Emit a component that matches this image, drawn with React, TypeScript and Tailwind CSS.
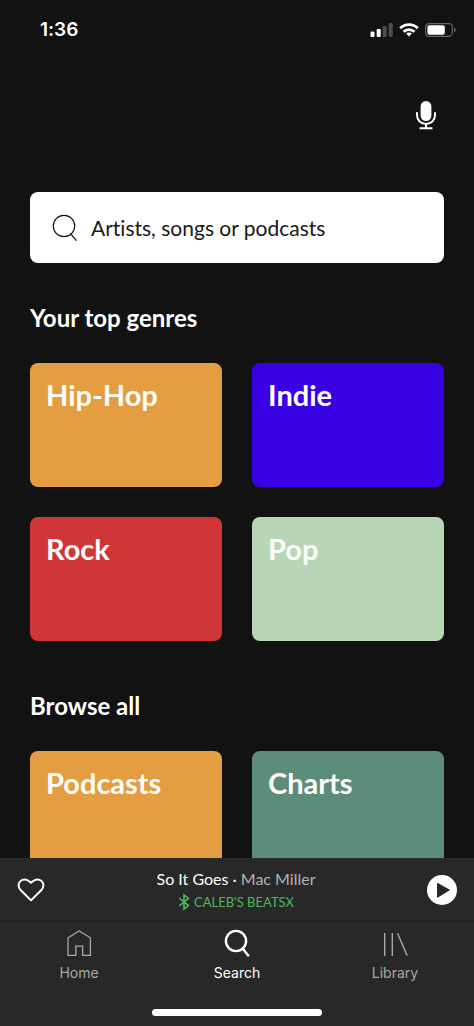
import { useState } from "react";

const topGenres = [
  { name: "Hip-Hop", color: "bg-[#e49d40]" },
  { name: "Indie", color: "bg-[#3a00e4]" },
  { name: "Rock", color: "bg-[#d03638]" },
  { name: "Pop", color: "bg-[#b8d5b5]" },
];

const browseAll = [
  { name: "Podcasts", color: "bg-[#e49d40]" },
  { name: "Charts", color: "bg-[#5c8d7b]" },
];

const StatusBar = () => {
  return (
    <div className="flex h-[59px] shrink-0 items-center justify-between pl-10 pr-[18px]">
      <span className="font-['Inter',sans-serif] text-[19px] font-semibold leading-6">
        1:36
      </span>
      <div className="flex items-center gap-[6px]">
        <svg width="23" height="14" viewBox="0 0 23 14" fill="white">
          <rect x="0.5" y="8.5" width="4" height="5.5" rx="1.2" />
          <rect x="6.7" y="6" width="4" height="8" rx="1.2" />
          <rect x="12.7" y="3" width="4" height="11" rx="1.2" opacity="0.25" />
          <rect x="18.7" y="0" width="4" height="14" rx="1.2" opacity="0.25" />
        </svg>
        <svg
          width="20"
          height="14"
          viewBox="0 0 20 14"
          fill="none"
          stroke="white"
          strokeWidth="2.8"
        >
          <path d="M1.2 5.2C6.2 0.3 13.8 0.3 18.8 5.2" />
          <path d="M4.5 8.8C7.6 5.9 12.4 5.9 15.5 8.8" />
          <path
            d="M10 9.4C8.8 9.4 7.9 9.8 7.1 10.5L10 13.6L12.9 10.5C12.1 9.8 11.2 9.4 10 9.4Z"
            fill="white"
            stroke="none"
          />
        </svg>
        <svg width="31" height="14" viewBox="0 0 31 14" fill="none">
          <rect
            x="0.6"
            y="0.6"
            width="26.8"
            height="12.8"
            rx="3.6"
            stroke="#666666"
            strokeWidth="1.2"
          />
          <rect x="2.4" y="2.2" width="17.4" height="9.6" rx="2" fill="white" />
          <path
            d="M29 4.8C30.1 5.2 30.8 6 30.8 7C30.8 8 30.1 8.8 29 9.2Z"
            fill="#666666"
          />
        </svg>
      </div>
    </div>
  );
};

const SearchIcon = ({ stroke }: { stroke: number }) => (
  <svg
    width="26"
    height="28"
    viewBox="0 0 26 28"
    fill="none"
    stroke="currentColor"
    strokeWidth={stroke}
    strokeLinecap="round"
  >
    <circle cx="12" cy="12" r={11.3 - stroke / 2} />
    <path d="M18.8 19.8L24.2 26.4" />
  </svg>
);

const GenreGrid = ({ items }: { items: { name: string; color: string }[] }) => {
  return (
    <div className="mt-[31px] grid grid-cols-2 gap-[30px]">
      {items.map((item) => (
        <button
          key={item.name}
          type="button"
          className={`flex h-[124px] items-start rounded-lg p-4 text-left text-[29px] font-bold leading-8 ${item.color}`}
        >
          {item.name}
        </button>
      ))}
    </div>
  );
};

const MiniPlayer = () => {
  const [liked, setLiked] = useState<boolean>(false);

  return (
    <div className="flex h-[62px] items-center justify-between border-t border-[#2c2c2c] px-[17px]">
      <button type="button" aria-label="Like" onClick={() => setLiked(!liked)}>
        <svg
          width="28"
          height="24"
          viewBox="0 0 28 24"
          fill={liked ? "white" : "none"}
          stroke="white"
          strokeWidth="2"
          strokeLinejoin="round"
        >
          <path d="M14 22.4L3.6 12C1 9.3 1 5.4 3.4 3.1C5.9 0.7 10 0.9 12.3 3.4L14 4.7L15.7 3.4C18 0.9 22.1 0.7 24.6 3.1C27 5.4 27 9.3 24.4 12Z" />
        </svg>
      </button>
      <div className="flex flex-col items-center">
        <p className="text-base leading-6 text-[#b3b3b3]">
          <span className="text-white">So It Goes ·</span> Mac Miller
        </p>
        <p className="flex items-center gap-1 text-[13px] leading-[22px] text-[#4fb658]">
          <svg
            width="12"
            height="18"
            viewBox="0 0 12 18"
            fill="none"
            stroke="currentColor"
            strokeWidth="1.6"
          >
            <path d="M1.2 5L10.4 12.6L6 16V2L10.4 5.4L1.2 13" />
          </svg>
          CALEB'S BEATSX
        </p>
      </div>
      <button type="button" aria-label="Play">
        <svg width="30" height="30" viewBox="0 0 30 30">
          <circle cx="15" cy="15" r="15" fill="white" />
          <path
            d="M10.5 8.3L22.3 15L10.5 22.3Z"
            fill="#282828"
            stroke="#282828"
            strokeLinejoin="round"
          />
        </svg>
      </button>
    </div>
  );
};

const NavBar = () => {
  const link = "flex flex-col items-center gap-[6px]";

  return (
    <nav className="grid grid-cols-3 pt-2 font-['Inter',sans-serif] text-sm leading-5 text-[#a8a8a8]">
      <a href="#home" className={link}>
        <svg
          width="26"
          height="28"
          viewBox="0 0 26 28"
          fill="none"
          stroke="currentColor"
          strokeWidth="1.3"
        >
          <path d="M2 26.4V8.8L13.2 2L24.4 8.8V26.4H16.6V17.2H9.8V26.4Z" />
        </svg>
        Home
      </a>
      <a href="#search" className={`${link} text-white`}>
        <SearchIcon stroke={2.4} />
        Search
      </a>
      <a href="#library" className={link}>
        <svg
          width="26"
          height="28"
          viewBox="0 0 26 28"
          fill="none"
          stroke="currentColor"
          strokeWidth="1.4"
        >
          <path d="M2.7 4V27M10.3 4V27M15.5 4.2L25.2 26.6" />
        </svg>
        Library
      </a>
    </nav>
  );
};

const App = () => {
  return (
    <div className="flex h-screen flex-col overflow-hidden bg-[#121212] font-['Lato',sans-serif] text-white [font-variant-ligatures:none]">
      <StatusBar />
      <main className="min-h-0 flex-1 overflow-hidden px-[30px]">
        <div className="flex justify-end pr-2 pt-[41px]">
          <button type="button" aria-label="Voice search">
            <svg
              width="20"
              height="30"
              viewBox="0 0 20 30"
              fill="none"
              stroke="white"
              strokeWidth="2"
            >
              <rect
                x="4.6"
                y="1"
                width="10.8"
                height="20"
                rx="5.4"
                fill="white"
                stroke="none"
              />
              <path d="M1 12.2V15C1 20.4 5 23.9 10 23.9C15 23.9 19 20.4 19 15V12.2" />
              <path d="M10 24V28M3.6 28.2H16.4" />
            </svg>
          </button>
        </div>
        <label className="mt-[62px] flex h-[71px] items-center gap-[13px] rounded-lg bg-white pl-[22px] pr-4 text-[#121212]">
          <SearchIcon stroke={1.2} />
          <input
            type="text"
            aria-label="Search"
            placeholder="Artists, songs or podcasts"
            className="min-w-0 flex-1 text-[21px] leading-7 outline-none placeholder:text-[#181818]"
          />
        </label>
        <section className="mt-[41px]">
          <h2 className="text-2xl font-bold leading-7">Your top genres</h2>
          <GenreGrid items={topGenres} />
        </section>
        <section className="mt-[51px]">
          <h2 className="text-2xl font-bold leading-7">Browse all</h2>
          <GenreGrid items={browseAll} />
        </section>
      </main>
      <footer className="shrink-0 bg-[#282828]">
        <MiniPlayer />
        <div className="border-t border-[#222222]">
          <NavBar />
        </div>
        <div className="flex justify-center pb-[10px] pt-[26px]">
          <div className="h-[7px] w-[170px] rounded-full bg-white" />
        </div>
      </footer>
    </div>
  );
};

export default App;
